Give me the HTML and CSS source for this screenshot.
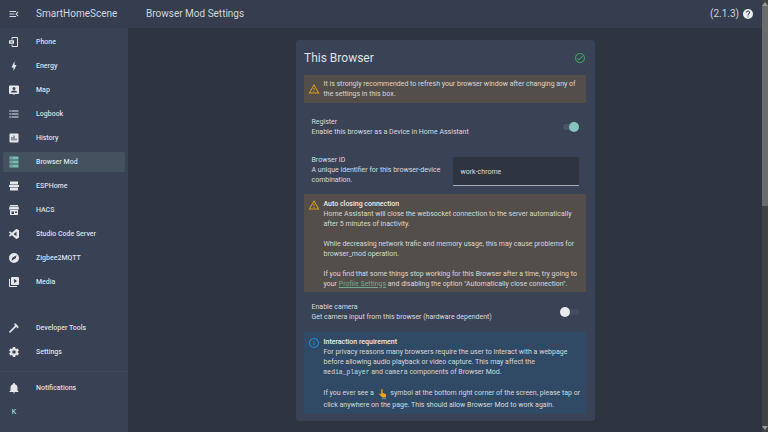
FILE: index.html
```html
<!DOCTYPE html>
<html>
<head>
<meta charset="utf-8">
<title>Browser Mod Settings</title>
<link rel="stylesheet" href="styles.css">
</head>
<body>
<aside class="sidebar">
  <div class="side-head">
    <svg class="head-icon" viewBox="0 0 24 24"><path d="M21,15.61L19.59,17L14.58,12L19.59,7L21,8.39L17.44,12L21,15.61M3,6H16V8H3V6M3,13V11H13V13H3M3,18V16H16V18H3Z"/></svg>
    <span class="side-title">SmartHomeScene</span>
  </div>
  <nav class="nav">
    <a class="nav-item"><svg viewBox="0 0 24 24"><path d="M9 2H18A2 2 0 0 1 20 4V20A2 2 0 0 1 18 22H9A2 2 0 0 1 7 20V17H9V20H18V4H9V7H7V4A2 2 0 0 1 9 2M3 8.5H11A1 1 0 0 1 12 9.5V14.5A1 1 0 0 1 11 15.5H3A1 1 0 0 1 2 14.5V9.5A1 1 0 0 1 3 8.5M5 11V13H9V11Z"/></svg>Phone</a>
    <a class="nav-item"><svg viewBox="0 0 24 24"><path d="M11 15H7L13 2V10H17L11 22Z"/></svg>Energy</a>
    <a class="nav-item"><svg viewBox="0 0 24 24"><path d="M4 3H20A2 2 0 0 1 22 5V18A2 2 0 0 1 20 20H14L12 22L10 20H4A2 2 0 0 1 2 18V5A2 2 0 0 1 4 3M12 6A3 3 0 0 0 12 12A3 3 0 0 0 12 6M6 17H18V16C18 14 14 13 12 13S6 14 6 16Z"/></svg>Map</a>
    <a class="nav-item"><svg viewBox="0 0 24 24"><path d="M7,5H21V7H7V5M7,13V11H21V13H7M4,4.5A1.5,1.5 0 0,1 5.5,6A1.5,1.5 0 0,1 4,7.5A1.5,1.5 0 0,1 2.5,6A1.5,1.5 0 0,1 4,4.5M4,10.5A1.5,1.5 0 0,1 5.5,12A1.5,1.5 0 0,1 4,13.5A1.5,1.5 0 0,1 2.5,12A1.5,1.5 0 0,1 4,10.5M7,19V17H21V19H7M4,16.5A1.5,1.5 0 0,1 5.5,18A1.5,1.5 0 0,1 4,19.5A1.5,1.5 0 0,1 2.5,18A1.5,1.5 0 0,1 4,16.5Z"/></svg>Logbook</a>
    <a class="nav-item"><svg viewBox="0 0 24 24"><path d="M19 3H5C3.9 3 3 3.9 3 5V19C3 20.1 3.9 21 5 21H19C20.1 21 21 20.1 21 19V5C21 3.9 20.1 3 19 3M9 17H7V10H9V17M13 17H11V7H13V17M17 17H15V13H17V17Z"/></svg>History</a>
    <a class="nav-item active"><svg viewBox="0 0 24 24"><path d="M4,1H20A1,1 0 0,1 21,2V6A1,1 0 0,1 20,7H4A1,1 0 0,1 3,6V2A1,1 0 0,1 4,1M4,9H20A1,1 0 0,1 21,10V14A1,1 0 0,1 20,15H4A1,1 0 0,1 3,14V10A1,1 0 0,1 4,9M4,17H20A1,1 0 0,1 21,18V22A1,1 0 0,1 20,23H4A1,1 0 0,1 3,22V18A1,1 0 0,1 4,17M9,5H10V3H9V5M9,13H10V11H9V13M9,21H10V19H9V21M5,3V5H7V3H5M5,11V13H7V11H5M5,19V21H7V19H5Z"/></svg>Browser Mod</a>
    <a class="nav-item"><svg viewBox="0 0 24 24"><path d="M4 3H20V9H4ZM2 10H22V14H2ZM4 15H20V21H4Z"/></svg>ESPHome</a>
    <a class="nav-item"><svg viewBox="0 0 24 24"><path d="M4 2H20V4H4ZM3 5H21L22 11H2ZM4 12H20V22H4ZM7 15V20H12V15ZM14 15V18H18V15Z"/></svg>HACS</a>
    <a class="nav-item"><svg viewBox="0 0 24 24"><path d="M17 16.47V7.39L11 11.93M2.22 9.19C1.92 8.87 1.91 8.37 2.2 8.04L3.4 6.93C3.6 6.75 4.09 6.67 4.45 6.93L7.87 9.54L15.8 2.29C16.12 1.97 16.67 1.84 17.3 2.17L21.3 4.08C21.66 4.29 22 4.62 22 5.23V18.73C22 19.13 21.71 19.56 21.4 19.73L17 21.83C16.68 21.96 16.08 21.84 15.87 21.63L7.85 14.33L4.45 16.93C4.07 17.19 3.6 17.12 3.4 16.93L2.2 15.83C1.88 15.5 1.92 14.96 2.25 14.63L5.25 11.93"/></svg>Studio Code Server</a>
    <a class="nav-item"><svg viewBox="0 0 24 24"><path fill-rule="evenodd" d="M12 2A10 10 0 1 1 12 22A10 10 0 1 1 12 2M17 6.5L8.5 11.5L7 17.5L15.5 12.5Z"/></svg>Zigbee2MQTT</a>
    <a class="nav-item"><svg viewBox="0 0 24 24"><path d="M4,6H2V20A2,2 0 0,0 4,22H18V20H4V6M20,2H8A2,2 0 0,0 6,4V16A2,2 0 0,0 8,18H20A2,2 0 0,0 22,16V4A2,2 0 0,0 20,2M12,14.5V5.5L18,10L12,14.5Z"/></svg>Media</a>
    <div class="nav-space"></div>
    <a class="nav-item"><svg viewBox="0 0 24 24"><path d="M2 19.63L13.43 8.2L12.72 7.5L14.14 6.07L12 3.89C13.2 2.7 15.09 2.7 16.27 3.89L19.87 7.5L18.45 8.91H21.29L22 9.62L18.45 13.21L17.74 12.5V9.62L16.27 11.04L15.56 10.33L4.13 21.76L2 19.63Z"/></svg>Developer Tools</a>
    <a class="nav-item"><svg viewBox="0 0 24 24"><path d="M12,15.5A3.5,3.5 0 0,1 8.5,12A3.5,3.5 0 0,1 12,8.5A3.5,3.5 0 0,1 15.5,12A3.5,3.5 0 0,1 12,15.5M19.43,12.97C19.47,12.65 19.5,12.33 19.5,12C19.5,11.67 19.47,11.34 19.43,11L21.54,9.37C21.73,9.22 21.78,8.95 21.66,8.73L19.66,5.27C19.54,5.05 19.27,4.96 19.05,5.05L16.56,6.05C16.04,5.66 15.5,5.32 14.87,5.07L14.5,2.42C14.46,2.18 14.25,2 14,2H10C9.75,2 9.54,2.18 9.5,2.42L9.13,5.07C8.5,5.32 7.96,5.66 7.44,6.05L4.95,5.05C4.73,4.96 4.46,5.05 4.34,5.27L2.34,8.73C2.21,8.95 2.27,9.22 2.46,9.37L4.57,11C4.53,11.34 4.5,11.67 4.5,12C4.5,12.33 4.53,12.65 4.57,12.97L2.46,14.63C2.27,14.78 2.21,15.05 2.34,15.27L4.34,18.73C4.46,18.95 4.73,19.03 4.95,18.95L7.44,17.94C7.96,18.34 8.5,18.68 9.13,18.93L9.5,21.58C9.54,21.82 9.75,22 10,22H14C14.25,22 14.46,21.82 14.5,21.58L14.87,18.93C15.5,18.67 16.04,18.34 16.56,17.94L19.05,18.95C19.27,19.03 19.54,18.95 19.66,18.73L21.66,15.27C21.78,15.05 21.73,14.78 21.54,14.63L19.43,12.97Z"/></svg>Settings</a>
  </nav>
  <div class="side-foot">
    <a class="nav-item"><svg viewBox="0 0 24 24"><path d="M21,19V20H3V19L5,17V11C5,7.9 7.03,5.17 10,4.29C10,4.19 10,4.1 10,4A2,2 0 0,1 12,2A2,2 0 0,1 14,4C14,4.1 14,4.19 14,4.29C16.97,5.17 19,7.9 19,11V17L21,19M14,21A2,2 0 0,1 12,23A2,2 0 0,1 10,21"/></svg>Notifications</a>
    <a class="nav-item"><span class="avatar">K</span></a>
  </div>
</aside>

<div class="main">
  <header class="topbar">
    <span class="top-title">Browser Mod Settings</span>
    <span class="version">(2.1.3)</span>
    <svg class="help" viewBox="0 0 24 24"><path d="M15.07,11.25L14.17,12.17C13.45,12.89 13,13.5 13,15H11V14.5C11,13.39 11.45,12.39 12.17,11.67L13.41,10.41C13.78,10.05 14,9.55 14,9C14,7.89 13.1,7 12,7A2,2 0 0,0 10,9H8A4,4 0 0,1 12,5A4,4 0 0,1 16,9C16,9.88 15.64,10.67 15.07,11.25M13,19H11V17H13M12,2A10,10 0 0,0 2,12A10,10 0 0,0 12,22A10,10 0 0,0 22,12C22,6.47 17.5,2 12,2Z"/></svg>
  </header>
  <div class="content">
    <section class="card">
      <div class="card-head">
        <h1>This Browser</h1>
        <svg class="ok" viewBox="0 0 24 24"><path d="M12 2C6.5 2 2 6.5 2 12S6.5 22 12 22 22 17.5 22 12 17.5 2 12 2M12 20C7.59 20 4 16.41 4 12S7.59 4 12 4 20 7.59 20 12 16.41 20 12 20M16.59 7.58L10 14.17L7.41 11.59L6 13L10 17L18 9L16.59 7.58Z"/></svg>
      </div>

      <div class="alert warn alert-short">
        <svg class="alert-icon centered" viewBox="0 0 24 24"><path d="M12,2L1,21H23M12,6L19.53,19H4.47M11,10V14H13V10M11,16V18H13V16"/></svg>
        <p>It is strongly recommended to refresh your browser window after changing any of the settings in this box.</p>
      </div>

      <div class="row row-register">
        <div class="row-text"><div>Register</div><div>Enable this browser as a Device in Home Assistant</div></div>
        <div class="toggle on"><span class="knob"></span></div>
      </div>

      <div class="row row-id">
        <div class="row-text id-text"><div>Browser ID</div><div>A unique identifier for this browser-device combination.</div></div>
        <div class="field">work-chrome</div>
      </div>

      <div class="alert warn alert-long">
        <svg class="alert-icon" viewBox="0 0 24 24"><path d="M12,2L1,21H23M12,6L19.53,19H4.47M11,10V14H13V10M11,16V18H13V16"/></svg>
        <div>
          <b>Auto closing connection</b><br>
          Home Assistant will close the websocket connection to the server automatically after 5 minutes of inactivity.<br><br>
          While decreasing network trafic and memory usage, this may cause problems for browser_mod operation.<br><br>
          If you find that some things stop working for this Browser after a time, try going to your <a class="link">Profile Settings</a> and disabling the option "Automatically close connection".
        </div>
      </div>

      <div class="row row-camera">
        <div class="row-text"><div>Enable camera</div><div>Get camera input from this browser (hardware dependent)</div></div>
        <div class="toggle"><span class="knob"></span></div>
      </div>

      <div class="alert info">
        <svg class="alert-icon" viewBox="0 0 24 24"><path d="M11,9H13V7H11M12,20C7.59,20 4,16.41 4,12C4,7.59 7.59,4 12,4C16.41,4 20,7.59 20,12C20,16.41 16.41,20 12,20M12,2A10,10 0 0,0 2,12A10,10 0 0,0 12,22A10,10 0 0,0 22,12A10,10 0 0,0 12,2M11,17H13V11H11V17Z"/></svg>
        <div>
          <b>Interaction requirement</b><br>
          For privacy reasons many browsers require the user to interact with a webpage before allowing audio playback or video capture. This may affect the <code>media_player</code> and <code>camera</code> components of Browser Mod.<br><br>
          If you ever see a <svg class="hand" viewBox="0 0 18 24"><path fill="#e9a31f" d="M5 2.5A1.6 1.6 0 0 1 8.2 2.5V10L14 11.5C15.2 11.8 16 12.8 16 14V17C16 19 14.5 20 12.5 20H9C7.5 20 6.4 19.4 5.5 18.3L0.8 13.3C0.2 12.5 0.4 11.5 1.2 11C2 10.5 2.8 10.7 3.4 11.3L5 13Z"/><path fill="#5b7fa0" d="M6 21H16V24H6Z"/></svg> symbol at the bottom right corner of the screen, please tap or click anywhere on the page. This should allow Browser Mod to work again.
        </div>
      </div>
    </section>
  </div>
</div>
<div class="scrollbar">
  <span class="arrow up"></span>
  <span class="thumb"></span>
  <span class="track"></span>
  <span class="arrow down"></span>
</div>
</body>
</html>
```

FILE: styles.css
```css
html, body { margin: 0; padding: 0; height: 100%; overflow: hidden; }
body { display: flex; width: 768px; height: 432px; background: #2e3440; color: #d8dbe0; font-family: Roboto, "Liberation Sans", sans-serif; font-size: 7px; line-height: 10px; }

.sidebar { width: 128px; flex: none; display: flex; flex-direction: column; background: #394154; }
.side-head { height: 28px; flex: none; display: flex; align-items: center; background: #353d4e; }
.head-icon { width: 12px; height: 12px; flex: none; margin-left: 8px; fill: #d8dbe0; }
.side-title { margin-left: 16px; font-size: 10px; color: #d3d6dc; }

.nav { flex: 1; display: flex; flex-direction: column; padding: 2px 0 7px; }
.nav-space { flex: 1; }
.nav-item { height: 20px; margin: 2px 3px; padding-left: 5px; display: flex; align-items: center; border-radius: 2px; font-weight: 500; color: #dcdfe4; }
.nav-item svg { width: 12px; height: 12px; flex: none; margin-right: 16px; fill: #e4e6ea; }
.nav-item.active { background: #445260; }
.nav-item.active svg { fill: #7cbcb0; }
.side-foot { display: flex; flex-direction: column; border-top: 1px solid #3e4659; padding: 4px 0 8px; }
.avatar { width: 12px; text-align: center; font-weight: 400; color: #e4e6ea; }

.main { flex: 1; min-width: 0; display: flex; flex-direction: column; }
.topbar { height: 28px; flex: none; display: flex; align-items: center; padding: 0 8px 0 18px; background: #353d4e; font-size: 10px; color: #d3d6dc; }
.top-title { flex: 1; }
.version { margin-right: 3px; color: #cfd3da; }
.help { width: 12px; height: 12px; fill: #eceef0; }

.content { flex: 1; min-height: 0; display: flex; justify-content: center; padding-top: 12px; }
.card { width: 299px; height: 381px; box-sizing: border-box; padding: 0 8.5px; background: #3a4256; border-radius: 3px; }
.card-head { height: 34.5px; box-sizing: border-box; padding-top: 2px; display: flex; align-items: center; justify-content: space-between; }
h1 { margin: 0; font-size: 12px; font-weight: 400; color: #dfe1e6; }
.ok { width: 12px; height: 12px; fill: #3f9c5a; }

.alert { display: flex; padding: 5px 5px 4px 3.5px; color: #d6d8da; }
.alert p { margin: 0; }
.alert b { font-weight: 500; color: #eceded; }
.warn { background: #534e49; }
.info { background: #304a66; }
.alert-short { padding-top: 4px; padding-bottom: 4px; }
.alert-long { padding-bottom: 3px; }
.alert-icon { width: 12px; height: 12px; flex: none; margin-right: 4px; fill: #d99a1c; }
.alert-icon.centered { align-self: center; }
.info .alert-icon { fill: #1f8fd0; }
.link { color: #6fa88f; text-decoration: underline; }
code { font-family: "Liberation Mono", "DejaVu Sans Mono", monospace; font-size: 6.4px; }
.hand { width: 8px; height: 12px; vertical-align: -5px; margin: 0 2px 0 3px; }

.row { display: flex; align-items: center; justify-content: space-between; padding: 0 7.5px; }
.row-register { margin-top: 14px; height: 20px; }
.row-id { margin-top: 18px; height: 30px; }
.id-text { width: 135px; }
.row-camera { margin-top: 10.5px; height: 20px; }
.row-camera + .alert { margin-top: 10px; }
.row-id + .alert { margin-top: 9px; }
.toggle { width: 16px; height: 6px; border-radius: 3px; background: #434b5e; position: relative; }
.toggle.on { background: #4a5668; }
.knob { position: absolute; top: -2px; left: -3px; width: 10px; height: 10px; border-radius: 50%; background: #e8eaed; }
.toggle.on .knob { left: auto; right: 0; background: #84c4bc; }
.field { width: 126px; height: 29px; margin-top: 4px; box-sizing: border-box; padding: 1px 8px 0; display: flex; align-items: center; background: #2e3440; border-bottom: 1px solid #a8adb8; border-radius: 2px 2px 0 0; color: #dadde2; }

.scrollbar { width: 6px; flex: none; height: 432px; display: flex; flex-direction: column; background: #414241; }
.thumb { display: block; height: 200px; flex: none; background: #6a6c6b; }
.track { flex: 1; }
.arrow { height: 6px; flex: none; box-sizing: border-box; border-left: 3px solid transparent; border-right: 3px solid transparent; }
.arrow.up { border-bottom: 4px solid #9a9c9b; }
.arrow.down { border-top: 4px solid #9a9c9b; }
```
